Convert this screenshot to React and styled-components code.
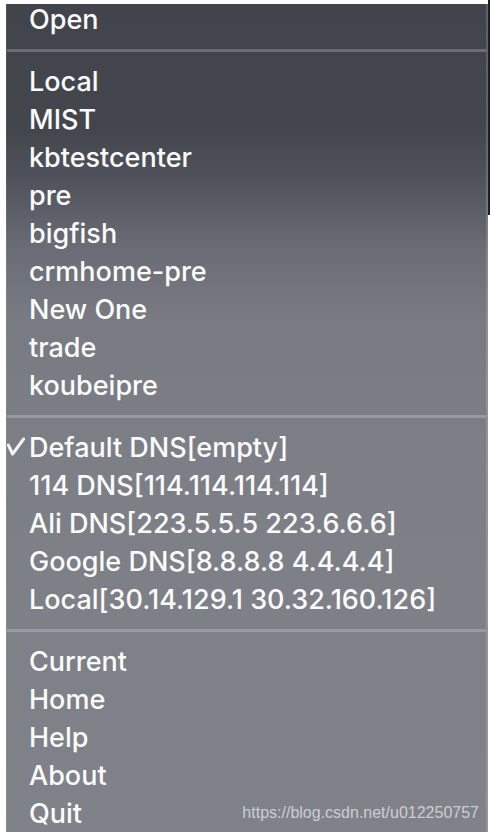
import React from "react";
import styled, { createGlobalStyle } from "styled-components";

const GlobalStyle = createGlobalStyle`
  html, body {
    margin: 0;
    background: #ffffff;
    overflow: hidden;
  }
`;

const Screen = styled.div`
  display: flex;
  align-items: flex-start;
  padding-left: 6px;
  height: 832px;
  box-sizing: border-box;
`;

const Menu = styled.div`
  position: relative;
  margin-top: 4px;
  width: 482px;
  height: 828px;
  box-sizing: border-box;
  overflow: hidden;
  border-left: 1px solid rgba(255, 255, 255, 0.08);
  border-right: 2px solid rgba(255, 255, 255, 0.16);
  background: linear-gradient(
    180deg,
    #41444b 0px,
    #43464d 126px,
    #50535b 176px,
    #6a6d75 246px,
    #787b82 316px,
    #7c7f86 460px,
    #7f8289 828px
  );
  font-family: Inter, "Liberation Sans", Arial, sans-serif;
`;

const List = styled.ul`
  list-style: none;
  margin: -3px 0 0;
  padding: 0;
`;

const Item = styled.li`
  display: flex;
  align-items: center;
  height: 38px;
  line-height: 38px;
  font-size: 27px;
  font-weight: 500;
  color: #fbfbfb;
  white-space: nowrap;
`;

const Gutter = styled.span`
  display: flex;
  align-items: center;
  width: 22px;
  height: 100%;
  flex-shrink: 0;
`;

const Separator = styled.li`
  height: 3px;
  margin: 10px 0 11px;
  background: rgba(255, 255, 255, 0.22);
`;

const Watermark = styled.div`
  position: absolute;
  right: 7px;
  bottom: 11px;
  font-family: "Liberation Sans", Arial, sans-serif;
  font-size: 16px;
  line-height: 16px;
  color: rgba(255, 255, 255, 0.62);
`;

const Backdrop = styled.div`
  width: 2px;
  height: 215px;
  background: #1c1e23;
`;

function Check() {
  return (
    <svg width="20" height="38" viewBox="0 0 20 38">
      <path
        d="M1.3 16 L5.6 25 L16.6 10"
        fill="none"
        stroke="#f4f4f4"
        strokeWidth="3"
        strokeLinecap="round"
        strokeLinejoin="round"
      />
    </svg>
  );
}

const sections = [
  [{ label: "Open" }],
  [
    { label: "Local" },
    { label: "MIST" },
    { label: "kbtestcenter" },
    { label: "pre" },
    { label: "bigfish" },
    { label: "crmhome-pre" },
    { label: "New One" },
    { label: "trade" },
    { label: "koubeipre" },
  ],
  [
    { label: "Default DNS[empty]", checked: true },
    { label: "114 DNS[114.114.114.114]" },
    { label: "Ali DNS[223.5.5.5 223.6.6.6]" },
    { label: "Google DNS[8.8.8.8 4.4.4.4]" },
    { label: "Local[30.14.129.1 30.32.160.126]" },
  ],
  [
    { label: "Current" },
    { label: "Home" },
    { label: "Help" },
    { label: "About" },
    { label: "Quit" },
  ],
];

export default function App() {
  return (
    <>
      <GlobalStyle />
      <Screen>
        <Menu>
          <List>
            {sections.map((items, i) => (
              <React.Fragment key={i}>
                {i > 0 && <Separator />}
                {items.map((item) => (
                  <Item key={item.label}>
                    <Gutter>{item.checked && <Check />}</Gutter>
                    {item.label}
                  </Item>
                ))}
              </React.Fragment>
            ))}
          </List>
          <Watermark>https://blog.csdn.net/u012250757</Watermark>
        </Menu>
        <Backdrop />
      </Screen>
    </>
  );
}
